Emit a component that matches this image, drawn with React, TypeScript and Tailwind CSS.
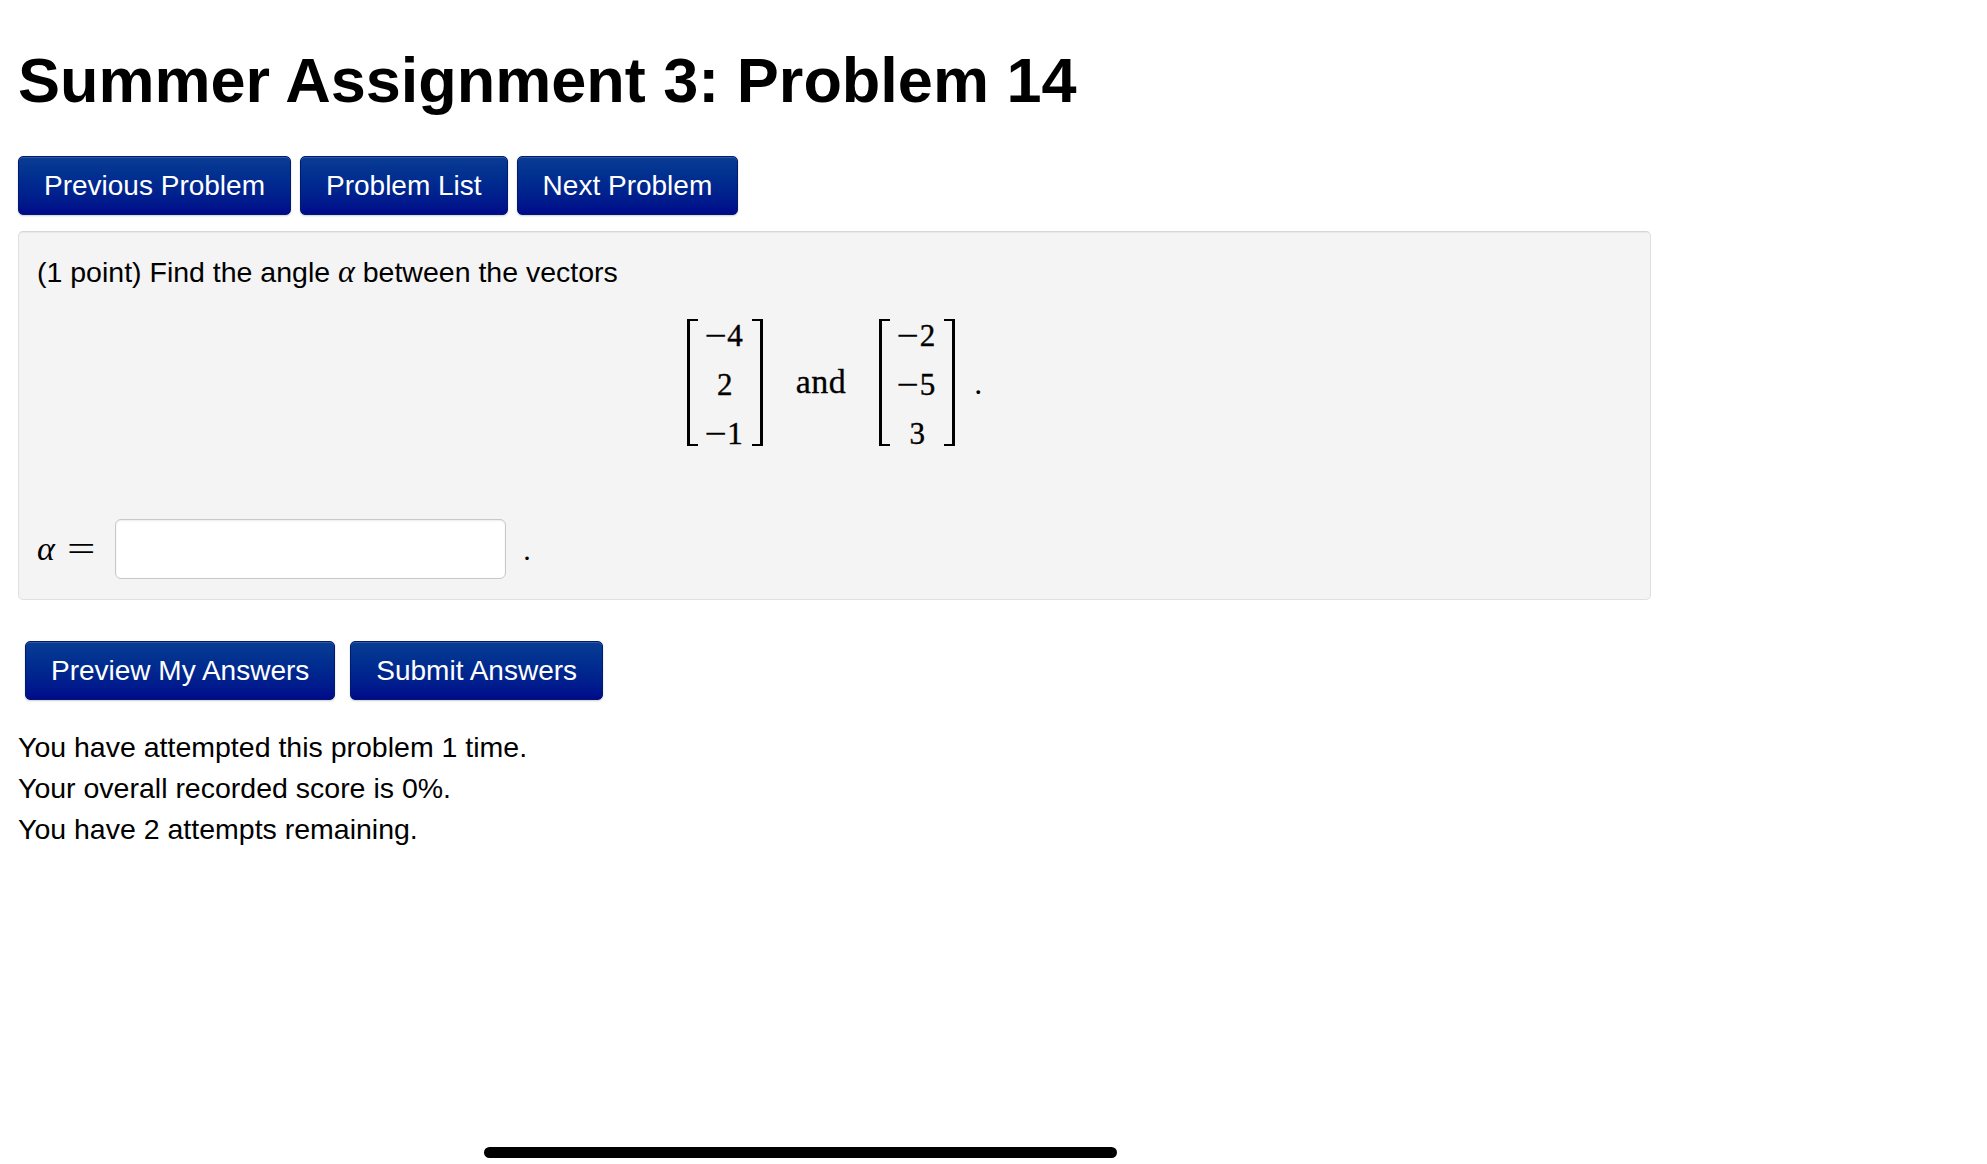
import React from "react";

const sans = "font-['Liberation_Sans',Arial,Helvetica,sans-serif]";
const serif = "font-['Liberation_Serif','Times_New_Roman',serif]";

function NavButton({ children }: { children: React.ReactNode }) {
  return (
    <button className="h-[59px] rounded-[5px] border border-[#001a70] bg-linear-to-b from-[#0b3c93] to-[#00098a] px-[25px] text-[28px] leading-none text-white shadow-[0_1px_2px_rgba(0,0,0,0.2),inset_0_1px_0_rgba(255,255,255,0.15)]">
      {children}
    </button>
  );
}

function Bracket({ side }: { side: "left" | "right" }) {
  return (
    <div
      className={
        side === "left"
          ? "h-[127px] w-[11px] border-y-2 border-l-[3px] border-black"
          : "h-[127px] w-[11px] border-y-2 border-r-[3px] border-black"
      }
    />
  );
}

function Vector({ values }: { values: string[] }) {
  return (
    <div className="flex items-center">
      <Bracket side="left" />
      <div className="mt-[4px] flex w-[54px] flex-col items-center [-webkit-text-stroke:0.4px_black]">
        {values.map((v, i) => (
          <div key={i} className="text-[31px] leading-[49px]">
            {v.startsWith("-") ? (
              <>
                <span className="mr-[3px] inline-block scale-x-125">−</span>
                {v.slice(1)}
              </>
            ) : (
              v
            )}
          </div>
        ))}
      </div>
      <Bracket side="right" />
    </div>
  );
}

export default function App() {
  return (
    <div className={`relative min-h-[1164px] bg-white text-black ${sans}`}>
      <div className="px-[18px]">
        <h1 className="pt-[46px] text-[63px] font-bold leading-[69px] text-black">
          Summer Assignment 3: Problem 14
        </h1>

        <div className="mt-[41px] flex gap-[9px]">
          <NavButton>Previous Problem</NavButton>
          <NavButton>Problem List</NavButton>
          <NavButton>Next Problem</NavButton>
        </div>

        {/* problem well */}
        <div className="mt-[16px] w-[1633px] rounded-[5px] border border-[#e0e0e0] border-t-[#d6d6d6] bg-[#f4f4f4] px-[18px] pb-[20px] pt-[19px] shadow-[inset_0_1px_1px_rgba(0,0,0,0.05)]">
          <p className="text-[28.5px] leading-[41px]">
            (1 point) Find the angle{" "}
            <span className={`${serif} text-[32px] italic`}>α</span> between
            the vectors
          </p>

          <div className={`mt-[16px] flex h-[147px] items-center justify-center ${serif}`}>
            <Vector values={["-4", "2", "-1"]} />
            <span className="mx-[33px] mb-[2px] text-[34px] tracking-[0.5px] [-webkit-text-stroke:0.3px_black]">
              and
            </span>
            <Vector values={["-2", "-5", "3"]} />
            <span className="ml-[19px] text-[32px]">.</span>
          </div>

          <div className="mt-[63px] flex h-[60px] items-center">
            <span className={`${serif} text-[34px] italic leading-none`}>α</span>
            <span
              className={`${serif} ml-[16px] inline-block scale-x-[140%] text-[36px] leading-none`}
            >
              =
            </span>
            <input
              type="text"
              className="ml-[24px] h-[60px] w-[391px] rounded-[6px] border border-[#c8c8c8] bg-white shadow-[inset_0_1px_2px_rgba(0,0,0,0.08)] outline-none"
            />
            <span className={`${serif} ml-[17px] text-[30px]`}>.</span>
          </div>
        </div>

        <div className="mt-[41px] flex gap-[15px] pl-[7px]">
          <NavButton>Preview My Answers</NavButton>
          <NavButton>Submit Answers</NavButton>
        </div>

        <div className="mt-[27px] text-[28.5px] leading-[41px]">
          <div>You have attempted this problem 1 time.</div>
          <div>Your overall recorded score is 0%.</div>
          <div>You have 2 attempts remaining.</div>
        </div>
      </div>

      {/* home indicator */}
      <div className="absolute left-[484px] top-[1147px] h-[11px] w-[633px] rounded-full bg-black" />
    </div>
  );
}
